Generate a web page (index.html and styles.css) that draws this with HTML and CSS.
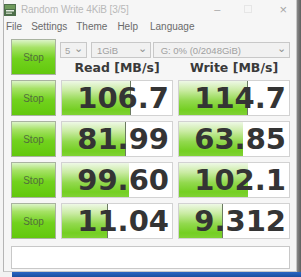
FILE: index.html
```html
<!DOCTYPE html>
<html>
<head>
<meta charset="utf-8">
<link rel="stylesheet" href="styles.css">
</head>
<body>
<div class="screen">
  <div class="desk">
    <div class="left-strip"></div>
    <div class="window">
      <div class="titlebar">
        <svg class="app-icon" width="12" height="12" viewBox="0 0 12 12">
          <rect x="0" y="0" width="12" height="12" fill="#4d6e4a"/>
          <rect x="1" y="1" width="10" height="4" fill="#6f9a5c"/>
          <rect x="2" y="6" width="8" height="1.5" fill="#e8eee4"/>
          <rect x="2" y="8.5" width="6" height="1.5" fill="#b9c9b2"/>
        </svg>
        <span class="title">Random Write 4KiB [3/5]</span>
        <div class="controls">
          <span class="ctl min">&#8211;</span>
          <span class="ctl max"></span>
          <span class="ctl close">&#215;</span>
        </div>
      </div>
      <div class="menubar">
        <span class="menu m-file">File</span>
        <span class="menu m-settings">Settings</span>
        <span class="menu m-theme">Theme</span>
        <span class="menu m-help">Help</span>
        <span class="menu m-lang">Language</span>
      </div>
      <div class="grid">
        <div class="stop big">Stop</div>
        <div class="selects">
          <div class="select s-count"><span>5</span><span class="chev">&#8964;</span></div>
          <div class="select s-size"><span>1GiB</span><span class="chev">&#8964;</span></div>
          <div class="select s-drive"><span>G: 0% (0/2048GiB)</span><span class="chev">&#8964;</span></div>
        </div>
        <div class="head">Read [MB/s]</div>
        <div class="head">Write [MB/s]</div>

        <div class="stop">Stop</div>
        <div class="cell"><div class="bar mark" style="width:69px"></div><span class="val">106.7</span></div>
        <div class="cell"><div class="bar mark" style="width:69px"></div><span class="val">114.7</span></div>

        <div class="stop">Stop</div>
        <div class="cell"><div class="bar mark" style="width:64px"></div><span class="val">81.99</span></div>
        <div class="cell"><div class="bar" style="width:64px"></div><span class="val">63.85</span></div>

        <div class="stop">Stop</div>
        <div class="cell"><div class="bar" style="width:67px"></div><span class="val">99.60</span></div>
        <div class="cell"><div class="bar" style="width:69px"></div><span class="val">102.1</span></div>

        <div class="stop">Stop</div>
        <div class="cell"><div class="bar mark" style="width:46px"></div><span class="val">11.04</span></div>
        <div class="cell"><div class="bar mark" style="width:44px"></div><span class="val">9.312</span></div>

        <div class="comment"></div>
      </div>
    </div>
    <div class="right-strip"></div>
  </div>
  <div class="taskbar">
    <div class="tb-left"></div>
    <div class="tb-blue"></div>
  </div>
</div>
</body>
</html>
```
FILE: styles.css
```css
* { box-sizing: border-box; }
html, body { margin: 0; padding: 0; }
body { width: 301px; height: 277px; overflow: hidden; background: #eeeeee; font-family: "Liberation Sans", Arial, sans-serif; }
.screen { width: 301px; height: 277px; display: flex; flex-direction: column; }
.desk { display: flex; height: 272px; }
.left-strip { width: 3px; background: #f4f4f4; }
.right-strip { width: 4px; background: linear-gradient(90deg, #8a8a8a, #5e5e5e); }
.window { width: 294px; height: 272px; background: #f6f6f6; border-left: 1px solid #b5b5b5; border-right: 1px solid #c8c8c8; border-bottom: 1px solid #c8c8c8; display: flex; flex-direction: column; }
.titlebar { height: 18px; display: flex; align-items: center; position: relative; }
.app-icon { margin-left: 0px; margin-top: 1px; }
.title { margin-left: 5px; font-size: 10px; color: #b9b9b9; letter-spacing: -0.1px; }
.controls { margin-left: auto; display: flex; align-items: center; height: 18px; }
.ctl { color: #a6a6a6; font-size: 11px; display: inline-block; }
.min { margin-right: 24px; }
.max { width: 8px; height: 8px; border: 1px solid #e6e6e6; margin-right: 27px; }
.close { margin-right: 9px; font-size: 13px; }
.menubar { height: 17px; display: flex; align-items: center; font-size: 10px; color: #6a6a6a; }
.menu { display: inline-block; }
.m-file { margin-left: 2px; }
.m-settings { margin-left: 9px; }
.m-theme { margin-left: 9px; }
.m-help { margin-left: 10px; }
.m-lang { margin-left: 12px; }
.grid { display: grid; grid-template-columns: 45px 112px 112px; grid-template-rows: 19px 22px 41px 41px 41px 41px auto; column-gap: 5px; padding: 4px 0 0 7px; }
.stop { height: 36px; align-self: start; border: 1px solid #a9b3a0; background: linear-gradient(#dcf4c8 0%, #a6e266 22%, #72d21e 55%, #62c80c 100%); color: #526e3c; font-size: 10px; display: flex; align-items: center; justify-content: center; font-family: "Liberation Sans", Arial, sans-serif; }
.stop.big { grid-row: 1 / 3; }
.selects { grid-column: 2 / 4; display: flex; align-items: flex-start; padding-top: 3px; margin-left: -1px; }
.select { height: 16px; border: 1px solid #c8c8c8; background: #f1f1f1; color: #a0a0a0; font-size: 9.5px; display: flex; align-items: center; padding-left: 4px; padding-right: 3px; }
.select .chev { margin-left: auto; color: #909090; font-size: 11px; line-height: 8px; position: relative; top: -2px; }
.s-count { width: 27px; margin-right: 4px; }
.s-size { width: 60px; margin-right: 2px; padding-left: 5px; }
.s-drive { width: 138px; padding-left: 7px; }
.head { font-family: "DejaVu Sans", sans-serif; font-weight: bold; font-size: 12.5px; color: #3a3a3a; text-align: center; align-self: start; padding-top: 2px; }
.cell { height: 36px; align-self: start; background: #ffffff; border: 1px solid #d2d2d2; position: relative; display: flex; align-items: center; justify-content: flex-end; padding-right: 3px; overflow: hidden; }
.bar { position: absolute; left: 0; top: 0; bottom: 0; background: linear-gradient(#eef8e6 0%, #c9eba2 28%, #92d94e 58%, #74cf22 85%, #80d234 100%); }
.bar.mark { border-right: 1px solid #6a7a60; }
.val { position: relative; font-family: "DejaVu Sans", sans-serif; font-weight: bold; font-size: 29px; color: #343434; line-height: 1; }
.comment { grid-column: 1 / 4; height: 23px; margin-top: 2px; background: #ffffff; border: 1px solid #c8c8c8; }
.taskbar { display: flex; height: 5px; }
.tb-left { width: 12px; background: #f2f2f2; }
.tb-blue { flex: 1; background: linear-gradient(#2a66c4, #1b4f9e); }
```
